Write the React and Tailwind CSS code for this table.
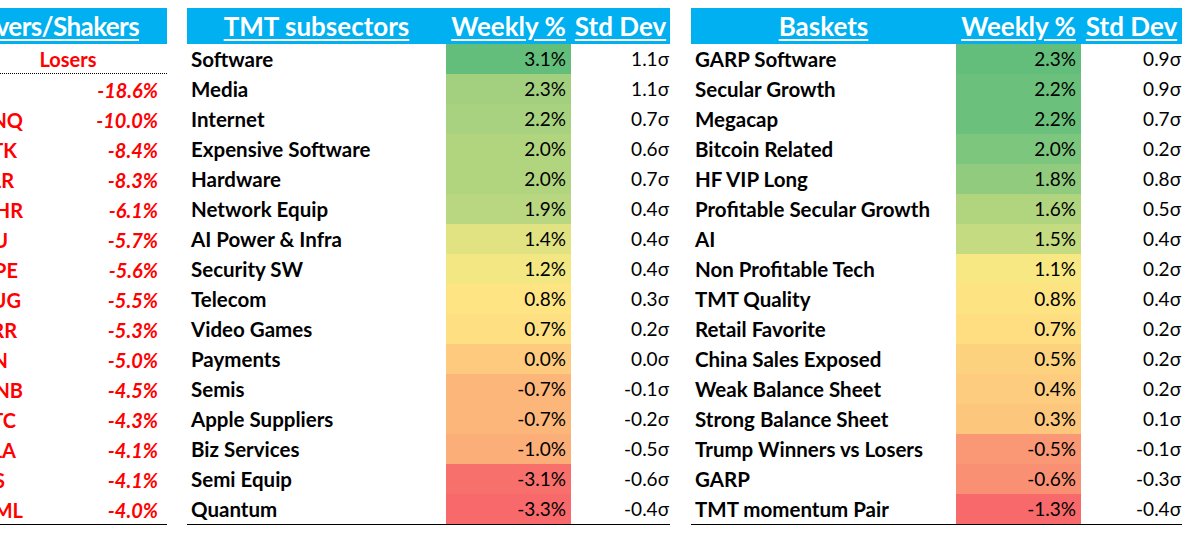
import React from "react";

const losers = [
  ["RGTI", "w-[0px]", "-18.6%"],
  ["IONQ", "w-[23px]", "-10.0%"],
  ["CRTK", "w-[17px]", "-8.4%"],
  ["BILR", "w-[14px]", "-8.3%"],
  ["ACHR", "w-[23px]", "-6.1%"],
  ["MU", "w-[8px]", "-5.7%"],
  ["HPE", "w-[18px]", "-5.6%"],
  ["FRUG", "w-[21px]", "-5.5%"],
  ["CRR", "w-[17px]", "-5.3%"],
  ["ON", "w-[8px]", "-5.0%"],
  ["FFNB", "w-[23px]", "-4.5%"],
  ["INTC", "w-[16px]", "-4.3%"],
  ["TSLA", "w-[16px]", "-4.1%"],
  ["SNPS", "w-[5px]", "-4.1%"],
  ["ASML", "w-[23px]", "-4.0%"],
];

const mid = [
  ["Software", "3.1%", "1.1σ", "bg-[#63BE7B]"],
  ["Media", "2.3%", "1.1σ", "bg-[#A2D07F]"],
  ["Internet", "2.2%", "0.7σ", "bg-[#A8D27F]"],
  ["Expensive Software", "2.0%", "0.6σ", "bg-[#B1D57F]"],
  ["Hardware", "2.0%", "0.7σ", "bg-[#B1D57F]"],
  ["Network Equip", "1.9%", "0.4σ", "bg-[#B8D780]"],
  ["AI Power & Infra", "1.4%", "0.4σ", "bg-[#E1E282]"],
  ["Security SW", "1.2%", "0.4σ", "bg-[#F2E783]"],
  ["Telecom", "0.8%", "0.3σ", "bg-[#FFE483]"],
  ["Video Games", "0.7%", "0.2σ", "bg-[#FEE082]"],
  ["Payments", "0.0%", "0.0σ", "bg-[#FDCA7E]"],
  ["Semis", "-0.7%", "-0.1σ", "bg-[#FCB67A]"],
  ["Apple Suppliers", "-0.7%", "-0.2σ", "bg-[#FCB67A]"],
  ["Biz Services", "-1.0%", "-0.5σ", "bg-[#FBAE78]"],
  ["Semi Equip", "-3.1%", "-0.6σ", "bg-[#F8706C]"],
  ["Quantum", "-3.3%", "-0.4σ", "bg-[#F8696B]"],
];

const right = [
  ["GARP Software", "2.3%", "0.9σ", "bg-[#63BE7B]"],
  ["Secular Growth", "2.2%", "0.9σ", "bg-[#6BC07C]"],
  ["Megacap", "2.2%", "0.7σ", "bg-[#6BC07C]"],
  ["Bitcoin Related", "2.0%", "0.2σ", "bg-[#7DC67D]"],
  ["HF VIP Long", "1.8%", "0.8σ", "bg-[#90CB7E]"],
  ["Profitable Secular Growth", "1.6%", "0.5σ", "bg-[#B1D57F]"],
  ["AI", "1.5%", "0.4σ", "bg-[#C5DB81]"],
  ["Non Profitable Tech", "1.1%", "0.2σ", "bg-[#F8E884]"],
  ["TMT Quality", "0.8%", "0.4σ", "bg-[#FEE383]"],
  ["Retail Favorite", "0.7%", "0.2σ", "bg-[#FEDE81]"],
  ["China Sales Exposed", "0.5%", "0.2σ", "bg-[#FDD27F]"],
  ["Weak Balance Sheet", "0.4%", "0.2σ", "bg-[#FDCC7E]"],
  ["Strong Balance Sheet", "0.3%", "0.1σ", "bg-[#FDC67D]"],
  ["Trump Winners vs Losers", "-0.5%", "-0.1σ", "bg-[#FA9774]"],
  ["GARP", "-0.6%", "-0.3σ", "bg-[#F99073]"],
  ["TMT momentum Pair", "-1.3%", "-0.4σ", "bg-[#F8696B]"],
];

function HeaderCell({ children, className = "" }) {
  return (
    <div className={"flex items-center justify-center whitespace-nowrap " + className}>
      <span className="underline decoration-2 underline-offset-[3px]">{children}</span>
    </div>
  );
}

function Table({ title, rows, nameW, stdW, widthCls }) {
  return (
    <div className={"flex flex-col shrink-0 " + widthCls}>
      <div className="flex h-[36px] bg-[#00B0F0] text-white font-bold text-[26px] pt-[1px]">
        <HeaderCell className={nameW}>{title}</HeaderCell>
        <HeaderCell className="w-[125px]">Weekly %</HeaderCell>
        <HeaderCell className={stdW}>Std Dev</HeaderCell>
      </div>
      <div className="flex flex-col border-b border-black">
        {rows.map(([name, pct, sd, bg]) => (
          <div key={name} className="flex h-[30px] items-center text-black">
            <div className={"font-bold text-[20.5px] pl-[4px] whitespace-nowrap " + nameW}>{name}</div>
            <div className={"w-[125px] h-full flex items-center justify-end pr-[5px] pt-[1px] text-[19px] " + bg}>{pct}</div>
            <div className={"flex justify-end pr-[1px] pt-[1px] text-[19px] " + stdW}>{sd}</div>
          </div>
        ))}
      </div>
    </div>
  );
}

export default function App() {
  return (
    <div className="w-[1200px] h-[534px] bg-white overflow-hidden flex pt-[8px] font-['Lato',sans-serif]">
      <div className="w-[167px] shrink-0 flex flex-col">
        <div className="h-[36px] bg-[#00B0F0] flex items-center justify-end pr-[28px] pt-[1px] text-white font-bold text-[26px] tracking-[-0.6px] whitespace-nowrap">
          <span className="underline decoration-2 underline-offset-[3px]">Movers/Shakers</span>
        </div>
        <div className="h-[30px] flex items-center justify-center pr-[31px] pt-[1px] border-b border-dotted border-black text-[#FF0000] font-bold text-[20px]">
          Losers
        </div>
        <div className="flex flex-col border-b border-black">
          {losers.map(([t, w, p], i) => (
            <div key={i} className="h-[30px] flex items-center justify-between pt-[1px] text-[#FF0000] font-bold text-[20px]">
              <div className={"flex justify-end whitespace-nowrap " + w}>{t}</div>
              <div className="italic pr-[9px]">{p}</div>
            </div>
          ))}
        </div>
      </div>
      <div className="ml-[20px]">
        <Table title="TMT subsectors" rows={mid} nameW="w-[259px]" stdW="w-[99px]" widthCls="w-[483px]" />
      </div>
      <div className="ml-[21px]">
        <Table title="Baskets" rows={right} nameW="w-[265px]" stdW="w-[101px]" widthCls="w-[491px]" />
      </div>
    </div>
  );
}
